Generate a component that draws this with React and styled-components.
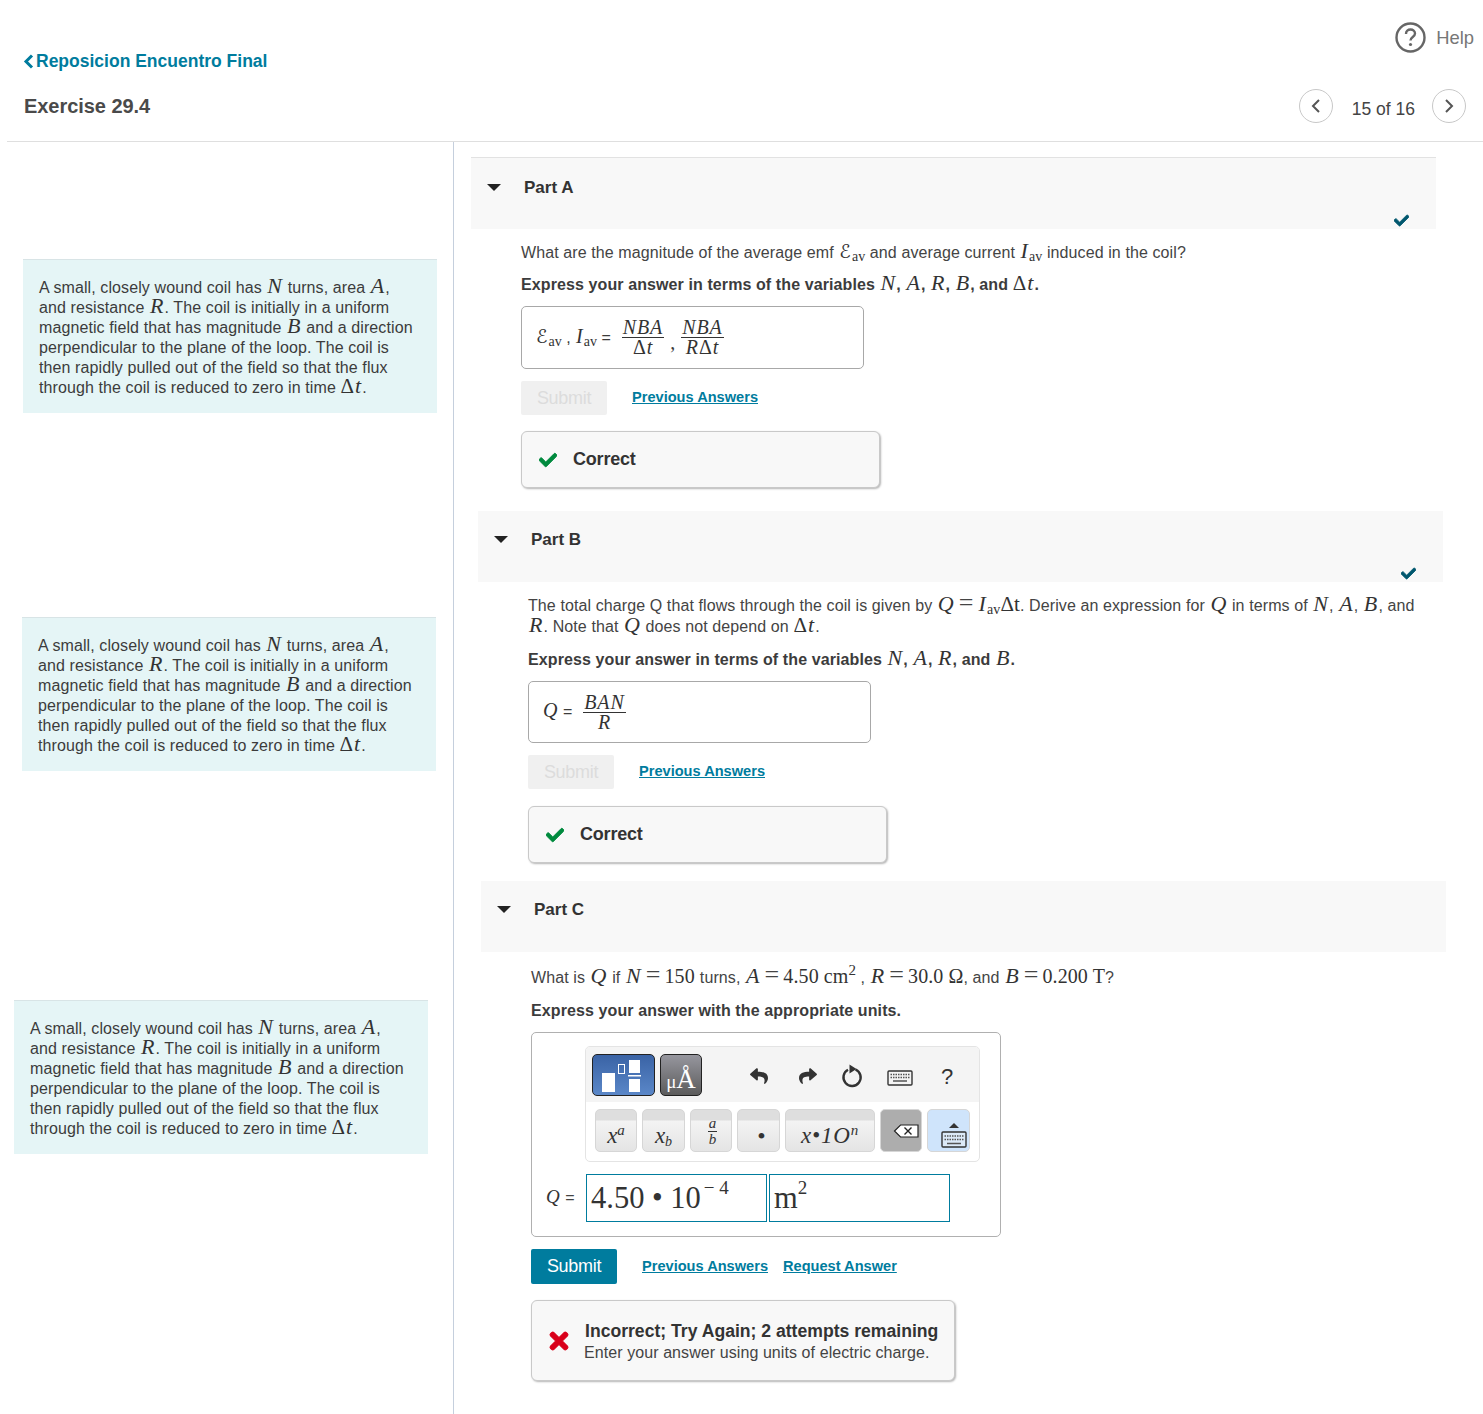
import React from "react";
import styled, { createGlobalStyle } from "styled-components";
import { FaCheck, FaTimes, FaReply, FaShare } from "react-icons/fa";

const teal = "#007c9e";

const GlobalStyle = createGlobalStyle`
  html, body {
    margin: 0;
    padding: 0;
    background: #fff;
    font-family: "Liberation Sans", Arial, sans-serif;
    color: #3c3c3c;
  }
`;

const Page = styled.div`
  width: 1483px;
  min-height: 1414px;
  display: flex;
  flex-direction: column;
`;

const Header = styled.header`
  height: 141px;
  margin-left: 7px;
  padding: 0 16px 0 17px;
  display: flex;
  justify-content: space-between;
  border-bottom: 1px solid #dfdfdf;
  box-sizing: content-box;
`;

const HeaderLeft = styled.div`
  padding-top: 50px;
`;

const BackLink = styled.a`
  display: flex;
  align-items: center;
  gap: 2px;
  height: 22px;
  margin-left: -1px;
  font-size: 17.5px;
  font-weight: bold;
  color: ${teal};
`;

const Title = styled.h1`
  margin: 22px 0 0;
  font-size: 20px;
  line-height: 24px;
  font-weight: bold;
  letter-spacing: -0.05px;
  color: #4a4a4a;
`;

const HeaderRight = styled.div`
  display: flex;
  flex-direction: column;
  align-items: flex-end;
  padding: 22px 0 0;
  margin-right: -7px;
`;

const HelpRow = styled.div`
  display: flex;
  align-items: center;
  gap: 10px;
  height: 31px;
  font-size: 18.4px;
  color: #777;
`;

const Pager = styled.div`
  display: flex;
  align-items: center;
  margin: 36px 8px 0 0;
  font-size: 17.5px;
  color: #444;
`;

const PagerText = styled.span`
  margin: 6px 17px 0 19px;
`;

const RoundButton = styled.span`
  width: 32px;
  height: 32px;
  border: 1px solid #c8c8c8;
  border-radius: 50%;
  display: flex;
  align-items: center;
  justify-content: center;
`;

const Body = styled.div`
  flex: 1;
  display: flex;
`;

const Sidebar = styled.aside`
  width: 453px;
  border-right: 1px solid #c5cfdd;
  flex-shrink: 0;
`;

const InfoBox = styled.div`
  width: 414px;
  height: 154px;
  box-sizing: border-box;
  margin-top: ${(p) => p.$top}px;
  margin-left: ${(p) => p.$left}px;
  padding: 18px 10px 0 16px;
  background: #e5f5f6;
  border-top: 1px solid #d8e4e6;
  font-size: 16px;
  line-height: 20px;
  letter-spacing: 0.1px;
  white-space: nowrap;
  color: #3c3c3c;
`;

const Main = styled.main`
  flex: 1;
  padding-top: 15px;
`;

const Part = styled.section`
  width: 965px;
  margin-left: ${(p) => p.$left}px;
  margin-top: ${(p) => p.$top || 0}px;
`;

const PartHead = styled.div`
  position: relative;
  height: ${(p) => p.$height}px;
  box-sizing: border-box;
  padding: ${(p) => (p.$line ? 20 : 19)}px 0 0 16px;
  display: flex;
  align-items: flex-start;
  background: #f8f8f8;
  border-top: ${(p) => (p.$line ? "1px solid #e2e2e2" : "none")};
  font-size: 17px;
  font-weight: bold;
  line-height: 20px;
  color: #333;
`;

const Caret = styled.span`
  width: 0;
  height: 0;
  margin: 6px 23px 0 0;
  border-left: 7px solid transparent;
  border-right: 7px solid transparent;
  border-top: 7px solid #222;
`;

const DoneMark = styled.span`
  position: absolute;
  right: 27px;
  bottom: 1px;
  line-height: 0;
  color: #00576e;
`;

const PartBody = styled.div`
  padding: ${(p) => p.$top}px 0 0 50px;
`;

const Question = styled.p`
  margin: 0;
  width: 905px;
  font-size: 16px;
  line-height: 21px;
  letter-spacing: 0.1px;
  white-space: nowrap;
  color: #444;
`;

const Instruction = styled.p`
  margin: ${(p) => p.$top}px 0 0;
  font-size: 16px;
  line-height: 22px;
  font-weight: bold;
  letter-spacing: 0.1px;
  color: #3c3c3c;
`;

const AnswerBox = styled.div`
  width: 343px;
  height: ${(p) => p.$height}px;
  margin-top: 10px;
  padding-left: 13px;
  box-sizing: border-box;
  display: flex;
  align-items: center;
  gap: 4px;
  border: 1px solid #a8a8a8;
  border-radius: 5px;
  font-size: 16px;
  color: #3c3c3c;
`;

const ActionRow = styled.div`
  display: flex;
  align-items: center;
  gap: 25px;
  margin-top: 12px;
`;

const SubmitButton = styled.button`
  width: 86px;
  height: ${(p) => (p.disabled ? 34 : 35)}px;
  padding: 0;
  border: none;
  border-radius: 2px;
  font-family: "Liberation Sans", Arial, sans-serif;
  font-size: 18px;
  letter-spacing: -0.3px;
  background: ${(p) => (p.disabled ? "#f0f0f0" : teal)};
  color: ${(p) => (p.disabled ? "#dcdcdc" : "#fff")};
`;

const TextLink = styled.a`
  margin-bottom: 2px;
  margin-left: ${(p) => p.$left || 0}px;
  font-size: 14.6px;
  font-weight: bold;
  color: ${teal};
  text-decoration: underline;
`;

const Feedback = styled.div`
  width: ${(p) => p.$width}px;
  height: ${(p) => p.$height}px;
  margin-top: ${(p) => p.$top || 16}px;
  box-sizing: border-box;
  background: #f8f8f8;
  border: 1px solid #c9c9c9;
  border-radius: 6px;
  box-shadow: 1px 1px 2px #b5b5b5;
  display: flex;
  align-items: center;
`;

const CorrectLabel = styled.span`
  margin-left: 16px;
  font-size: 18px;
  font-weight: bold;
  letter-spacing: -0.2px;
  color: #333;
`;

const StatusIcon = styled.span`
  margin-left: ${(p) => p.$left}px;
  display: flex;
  color: ${(p) => p.$color};
`;

const IncorrectBlock = styled.div`
  margin: 3px 0 0 12px;
  display: flex;
  flex-direction: column;
`;

const IncorrectTitle = styled.strong`
  font-size: 17.6px;
  line-height: 21px;
  margin-left: 1px;
  color: #333;
`;

const IncorrectHint = styled.span`
  font-size: 16px;
  line-height: 22px;
  letter-spacing: 0.08px;
  color: #444;
`;

const EditorBox = styled.div`
  width: 470px;
  height: 205px;
  margin-top: 10px;
  padding: 13px 0 0 13px;
  box-sizing: border-box;
  border: 1px solid #b0b0b0;
  border-radius: 5px;
`;

const Toolbar = styled.div`
  width: 395px;
  height: 116px;
  margin-left: 40px;
  box-sizing: border-box;
  border: 1px solid #e4e4e4;
  border-radius: 5px;
  overflow: hidden;
`;

const ToolTop = styled.div`
  height: 55px;
  padding: 7px 0 0 6px;
  box-sizing: border-box;
  display: flex;
  background: #f4f4f4;
`;

const ModeButton = styled.span`
  width: ${(p) => p.$width}px;
  height: 42px;
  margin-right: 5px;
  box-sizing: border-box;
  border: 1px solid #222;
  border-radius: 5px;
  display: flex;
  align-items: flex-end;
  justify-content: center;
  background: ${(p) => p.$bg};
  color: #fff;
  font-family: "Liberation Serif", serif;
  font-size: 27px;
  line-height: 26px;
`;

const MuGlyph = styled.span`
  font-size: 19px;
`;

const ToolIcons = styled.div`
  display: flex;
  align-items: center;
  height: 42px;
  margin-left: 32px;
`;

const ToolIcon = styled.span`
  width: ${(p) => p.$width}px;
  flex-shrink: 0;
  display: flex;
  justify-content: center;
  padding-top: ${(p) => p.$down || 0}px;
  color: #333;
  font-size: 22px;
`;

const ToolBottom = styled.div`
  display: flex;
  gap: 5px;
  padding: 7px 0 0 9px;
`;

const KeyButton = styled.span`
  width: ${(p) => p.$width}px;
  height: 43px;
  box-sizing: border-box;
  padding-top: ${(p) => (p.$pad === undefined ? 10 : p.$pad)}px;
  padding-left: ${(p) => p.$shift || 0}px;
  border: 1px solid #d6d6d6;
  border-radius: 5px;
  display: flex;
  align-items: center;
  justify-content: center;
  background: ${(p) =>
    p.$bg || "linear-gradient(#dedede 0, #dedede 10px, #f3f3f3 11px, #e4e4e4 100%)"};
  font-family: "Liberation Serif", serif;
  font-size: 23px;
  font-style: italic;
  color: #333;
`;

const KeyGlyph = styled.span`
  line-height: 30px;
  white-space: nowrap;
  letter-spacing: ${(p) => p.$spread || 0}px;
`;

const KeyDot = styled.span`
  font-style: normal;
  font-size: 24px;
  line-height: 24px;
`;

const KeyFraction = styled.span`
  display: inline-flex;
  flex-direction: column;
  align-items: center;
  margin-top: -9px;
  font-size: 15px;
  line-height: 15px;
`;

const EntryRow = styled.div`
  display: flex;
  align-items: center;
  margin-top: 12px;
`;

const EntryLabel = styled.span`
  width: 41px;
  font-size: 16px;
  color: #444;
`;

const EntryField = styled.div`
  width: 181px;
  height: 48px;
  margin-right: 2px;
  padding-left: 4px;
  box-sizing: border-box;
  border: 1px solid ${teal};
  font-family: "Liberation Serif", serif;
  font-size: 30.5px;
  line-height: 46px;
  white-space: nowrap;
  color: #333;
`;

const EntrySup = styled.sup`
  font-size: 19px;
  line-height: 0;
  vertical-align: 14px;
  margin-left: ${(p) => p.$left || 0}px;
`;

const V = styled.i`
  margin: 0 1px;
  font-family: "Liberation Serif", "DejaVu Serif", serif;
  font-size: ${(p) => p.$size || 22}px;
  line-height: 0;
  font-weight: normal;
  color: #333;
`;

const Script = styled.i`
  margin: 0 1px;
  font-family: "DejaVu Sans", serif;
  font-size: 19px;
  line-height: 0;
  font-weight: normal;
  color: #333;
`;

const R = styled.span`
  font-family: "Liberation Serif", "DejaVu Serif", serif;
  font-size: ${(p) => p.$size || 20}px;
  line-height: 0;
  font-weight: normal;
  color: #333;
`;

const Eq = styled.span`
  margin: 0 4px;
  font-family: "Liberation Serif", serif;
  font-size: 26px;
  line-height: 0;
  font-weight: normal;
  color: #444;
`;

const Sub = styled.sub`
  font-family: "Liberation Serif", serif;
  font-size: 14px;
  line-height: 0;
  vertical-align: -3px;
  font-weight: normal;
  color: #333;
`;

const Sup = styled.sup`
  font-family: "Liberation Serif", serif;
  font-size: 15px;
  line-height: 0;
  vertical-align: 8px;
  color: #333;
`;

const Fraction = styled.span`
  display: inline-flex;
  flex-direction: column;
  align-items: center;
  margin-left: ${(p) => p.$left || 0}px;
  font-family: "Liberation Serif", serif;
  font-style: italic;
  font-size: 20px;
  line-height: 19px;
  letter-spacing: 0.9px;
  color: #333;
`;

const Numer = styled.span`
  padding: 0 1px;
  border-bottom: 1px solid #333;
`;

const Upright = styled.span`
  font-style: normal;
`;

const Comma = styled.span`
  margin: 8px 2px 0;
  font-family: "Liberation Serif", serif;
  font-size: 20px;
  line-height: 18px;
`;

const Delta = () => (
  <>
    <R $size={21}>Δ</R>
    <V>t</V>
  </>
);

const Info = ({ top, left }) => (
  <InfoBox $top={top} $left={left}>
    A small, closely wound coil has <V>N</V> turns, area <V>A</V>,<br />
    and resistance <V>R</V>. The coil is initially in a uniform
    <br />
    magnetic field that has magnitude <V>B</V> and a direction
    <br />
    perpendicular to the plane of the loop. The coil is
    <br />
    then rapidly pulled out of the field so that the flux
    <br />
    through the coil is reduced to zero in time <Delta />.
  </InfoBox>
);

const Check = ({ size }) => <FaCheck size={size} stroke="currentColor" strokeWidth={28} />;

const Head = ({ label, height, line, done }) => (
  <PartHead $height={height} $line={line}>
    <Caret />
    {label}
    {done && (
      <DoneMark>
        <Check size={15} />
      </DoneMark>
    )}
  </PartHead>
);

const Correct = ({ top }) => (
  <Feedback $width={359} $height={57} $top={top}>
    <StatusIcon $left={17} $color="#008a3e">
      <Check size={18} />
    </StatusIcon>
    <CorrectLabel>Correct</CorrectLabel>
  </Feedback>
);

const HelpIcon = () => (
  <svg width="31" height="31" viewBox="0 0 31 31" fill="none">
    <circle cx="15.5" cy="15.5" r="14" stroke="#666" strokeWidth="2.4" />
    <path d="M11 12c0-3 2-4.500 4.500-4.500S20 9 20 11.500c0 3.500-4.500 3.500-4.500 7" stroke="#666" strokeWidth="2.4" />
    <circle cx="15.500" cy="22.500" r="1.600" fill="#666" />
  </svg>
);

const Chevron = ({ d }) => (
  <svg width="12" height="16" viewBox="0 0 12 16" fill="none">
    <path d={d} stroke="#555" strokeWidth="2" />
  </svg>
);

const TemplateIcon = () => (
  <svg width="44" height="36" viewBox="0 0 44 36">
    <rect x="0" y="14" width="13" height="19" fill="#fff" />
    <rect x="16.500" y="5.500" width="6" height="9" fill="none" stroke="#fff" />
    <rect x="27" y="1" width="11" height="13" fill="#fff" />
    <rect x="26" y="16" width="13" height="1.500" fill="#fff" />
    <rect x="27" y="20" width="11" height="13" fill="#fff" />
  </svg>
);

const ResetIcon = () => (
  <svg width="24" height="26" viewBox="0 0 24 26" fill="none">
    <path d="M14.500 6.500A8.600 8.600 0 1 1 7 6.800" stroke="#333" strokeWidth="2.400" />
    <path d="M8.500 1.500l7 4.500-7 4.500z" fill="#333" />
  </svg>
);

const KeyboardIcon = () => (
  <svg width="26" height="16" viewBox="0 0 26 16" fill="none">
    <rect x="1" y="1" width="24" height="14" rx="1" fill="#f4f4f4" stroke="#333" strokeWidth="1.400" />
    <path d="M3.500 4.500h19M3.500 7.500h19" stroke="#555" strokeWidth="1.500" strokeDasharray="1.500 1" />
    <path d="M6 11h14" stroke="#555" strokeWidth="1.500" />
  </svg>
);

const BackspaceIcon = () => (
  <svg width="26" height="16" viewBox="0 0 26 16" fill="none">
    <path d="M25 2H7.500L1.500 8l6 6H25z" fill="#fff" stroke="#222" strokeWidth="1.200" />
    <path d="M11.500 4.500l7 7M18.500 4.500l-7 7" stroke="#222" strokeWidth="1.400" />
  </svg>
);

const KeyboardToggleIcon = () => (
  <svg width="26" height="28" viewBox="0 0 26 28" fill="none">
    <path d="M8 7l5-5 5 5z" fill="#333" />
    <rect x="1" y="11" width="24" height="15" rx="1" fill="#dbe9f7" stroke="#333" strokeWidth="1.400" />
    <path d="M3.500 15h19M3.500 18.500h19" stroke="#555" strokeWidth="1.500" strokeDasharray="1.500 1" />
    <path d="M6 22.500h14" stroke="#555" strokeWidth="1.500" />
  </svg>
);

const Editor = () => (
  <EditorBox>
    <Toolbar>
      <ToolTop>
        <ModeButton $width={63} $bg="linear-gradient(#3a63a5, #5a87c8)">
          <TemplateIcon />
        </ModeButton>
        <ModeButton $width={42} $bg="linear-gradient(#96969e, #5c5c5c)">
          <span>
            <MuGlyph>μ</MuGlyph>Å
          </span>
        </ModeButton>
        <ToolIcons>
          <ToolIcon $width={40} $down={2}>
            <FaReply size={18} />
          </ToolIcon>
          <ToolIcon $width={58} $down={2}>
            <FaShare size={18} />
          </ToolIcon>
          <ToolIcon $width={32} $down={1}>
            <ResetIcon />
          </ToolIcon>
          <ToolIcon $width={62} $down={6}>
            <KeyboardIcon />
          </ToolIcon>
          <ToolIcon $width={32} $down={3}>
            ?
          </ToolIcon>
        </ToolIcons>
      </ToolTop>
      <ToolBottom>
        <KeyButton $width={42}>
          <KeyGlyph>
            x<Sup>a</Sup>
          </KeyGlyph>
        </KeyButton>
        <KeyButton $width={43}>
          <KeyGlyph>
            x<Sub>b</Sub>
          </KeyGlyph>
        </KeyButton>
        <KeyButton $width={42} $shift={3}>
          <KeyFraction>
            <Numer>a</Numer>b
          </KeyFraction>
        </KeyButton>
        <KeyButton $width={43} $shift={6}>
          <KeyDot>•</KeyDot>
        </KeyButton>
        <KeyButton $width={90}>
          <KeyGlyph $spread={0.8}>
            x•1O<Sup>n</Sup>
          </KeyGlyph>
        </KeyButton>
        <KeyButton $width={42} $bg="#adadad" $pad={0} $shift={10}>
          <BackspaceIcon />
        </KeyButton>
        <KeyButton $width={43} $bg="#cfe4fb" $pad={9} $shift={10}>
          <KeyboardToggleIcon />
        </KeyButton>
      </ToolBottom>
    </Toolbar>
    <EntryRow>
      <EntryLabel>
        <V $size={19}>Q</V> =
      </EntryLabel>
      <EntryField>
        4.50 • 10
        <EntrySup $left={3}>− 4</EntrySup>
      </EntryField>
      <EntryField>
        m<EntrySup>2</EntrySup>
      </EntryField>
    </EntryRow>
  </EditorBox>
);

export default function App() {
  return (
    <Page>
      <GlobalStyle />
      <Header>
        <HeaderLeft>
          <BackLink>
            <svg width="11" height="15" viewBox="0 0 11 15" fill="none">
              <path d="M9 1.500L3 7.500l6 6" stroke={teal} strokeWidth="3" />
            </svg>
            Reposicion Encuentro Final
          </BackLink>
          <Title>Exercise 29.4</Title>
        </HeaderLeft>
        <HeaderRight>
          <HelpRow>
            <HelpIcon />
            <span>Help</span>
          </HelpRow>
          <Pager>
            <RoundButton>
              <Chevron d="M9 2L3 8l6 6" />
            </RoundButton>
            <PagerText>15 of 16</PagerText>
            <RoundButton>
              <Chevron d="M3 2l6 6-6 6" />
            </RoundButton>
          </Pager>
        </HeaderRight>
      </Header>
      <Body>
        <Sidebar>
          <Info top={117} left={23} />
          <Info top={204} left={22} />
          <Info top={229} left={14} />
        </Sidebar>
        <Main>
          <Part $left={17}>
            <Head label="Part A" height={72} line done />
            <PartBody $top={13}>
              <Question>
                What are the magnitude of the average emf <Script>ℰ</Script>
                <Sub>av</Sub> and average current <V>I</V>
                <Sub>av</Sub> induced in the coil?
              </Question>
              <Instruction $top={11}>
                Express your answer in terms of the variables <V>N</V>, <V>A</V>, <V>R</V>, <V>B</V>, and <Delta />.
              </Instruction>
              <AnswerBox $height={63}>
                <span>
                  <Script>ℰ</Script>
                  <Sub>av</Sub> , <V $size={20}>I</V>
                  <Sub>av</Sub> =
                </span>
                <Fraction $left={7}>
                  <Numer>NBA</Numer>
                  <span>
                    <Upright>Δ</Upright>t
                  </span>
                </Fraction>
                <Comma>,</Comma>
                <Fraction>
                  <Numer>NBA</Numer>
                  <span>
                    R<Upright>Δ</Upright>t
                  </span>
                </Fraction>
              </AnswerBox>
              <ActionRow>
                <SubmitButton disabled>Submit</SubmitButton>
                <TextLink>Previous Answers</TextLink>
              </ActionRow>
              <Correct />
            </PartBody>
          </Part>
          <Part $left={24} $top={23}>
            <Head label="Part B" height={71} done />
            <PartBody $top={13}>
              <Question>
                The total charge Q that flows through the coil is given by <V>Q</V>
                <Eq>=</Eq>
                <V>I</V>
                <Sub>av</Sub>
                <R $size={21}>Δt</R>. Derive an expression for <V>Q</V> in terms of <V>N</V>, <V>A</V>, <V>B</V>, and
                <br />
                <V>R</V>. Note that <V>Q</V> does not depend on <Delta />.
              </Question>
              <Instruction $top={12}>
                Express your answer in terms of the variables <V>N</V>, <V>A</V>, <V>R</V>, and <V>B</V>.
              </Instruction>
              <AnswerBox $height={62}>
                <span>
                  <V $size={20}>Q</V> =
                </span>
                <Fraction $left={7}>
                  <Numer>BAN</Numer>R
                </Fraction>
              </AnswerBox>
              <ActionRow>
                <SubmitButton disabled>Submit</SubmitButton>
                <TextLink>Previous Answers</TextLink>
              </ActionRow>
              <Correct top={17} />
            </PartBody>
          </Part>
          <Part $left={27} $top={18}>
            <Head label="Part C" height={71} />
            <PartBody $top={15}>
              <Question>
                What is <V>Q</V> if <V>N</V>
                <Eq>=</Eq>
                <R>150 </R>turns, <V>A</V>
                <Eq>=</Eq>
                <R>4.50 cm</R>
                <Sup>2</Sup> , <V>R</V>
                <Eq>=</Eq>
                <R>30.0 Ω</R>, and <V>B</V>
                <Eq>=</Eq>
                <R>0.200 T</R>?
              </Question>
              <Instruction $top={12}>Express your answer with the appropriate units.</Instruction>
              <Editor />
              <ActionRow>
                <SubmitButton>Submit</SubmitButton>
                <TextLink>Previous Answers</TextLink>
                <TextLink $left={-10}>Request Answer</TextLink>
              </ActionRow>
              <Feedback $width={424} $height={81}>
                <StatusIcon $left={14} $color="#d9001b">
                  <FaTimes size={26} stroke="currentColor" strokeWidth={20} />
                </StatusIcon>
                <IncorrectBlock>
                  <IncorrectTitle>Incorrect; Try Again; 2 attempts remaining</IncorrectTitle>
                  <IncorrectHint>Enter your answer using units of electric charge.</IncorrectHint>
                </IncorrectBlock>
              </Feedback>
            </PartBody>
          </Part>
        </Main>
      </Body>
    </Page>
  );
}
